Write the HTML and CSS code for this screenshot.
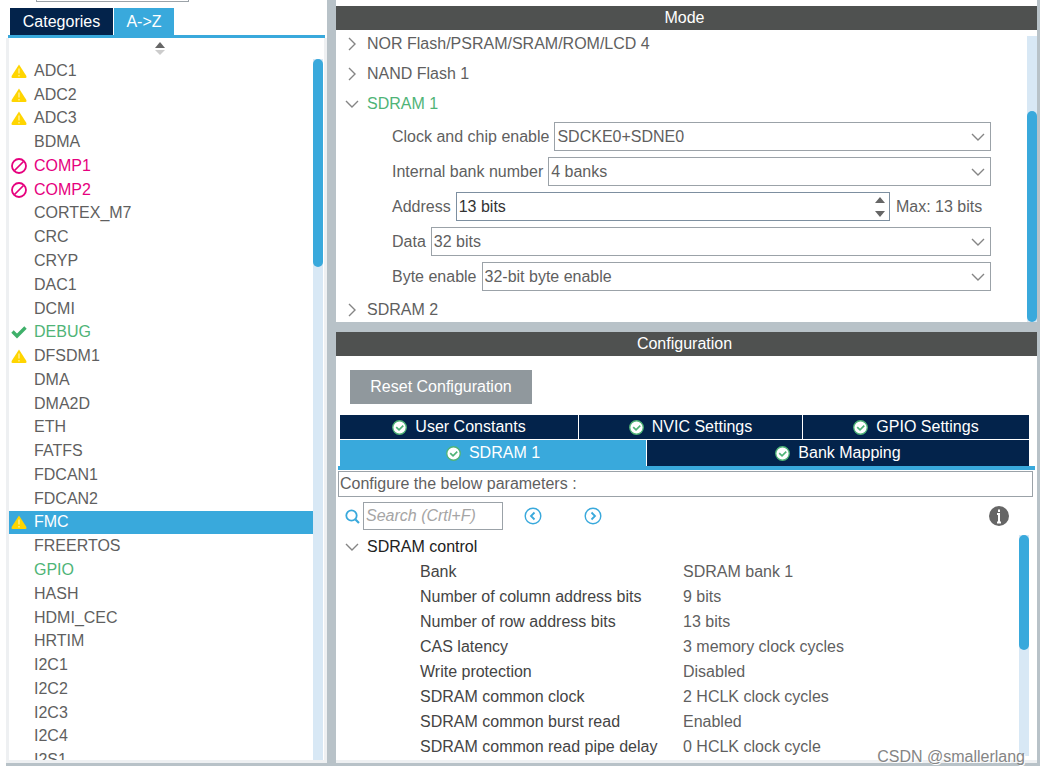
FILE: index.html
```html
<!DOCTYPE html>
<html lang="en">

<head>
  <meta charset="utf-8">
  <title>FMC Mode and Configuration</title>
  <link rel="stylesheet" href="styles.css">
</head>

<body>
  <!-- shared icons -->
  <svg class="sprite" aria-hidden="true">
    <symbol id="warn" viewBox="0 0 16 14">
      <path d="M8 0.5 L15.4 12 Q16 14 14.500 14 H1.500 Q0 14 0.600 12 Z" fill="#ffd500" />
      <path d="M8 4.500 V9.500 M8 11 V12.500" stroke="#fff0a0" stroke-width="1.300" />
    </symbol>
    <symbol id="block" viewBox="0 0 16 16">
      <circle cx="8" cy="8" r="7" fill="none" stroke="currentColor" stroke-width="1.800" />
      <path d="M3.500 12.500 L12.500 3.500" stroke="currentColor" stroke-width="1.700" />
    </symbol>
    <symbol id="check" viewBox="0 0 16 14">
      <path d="M1.500 6.500 L6 11 L14.500 2.500" fill="none" stroke="#3fb06a" stroke-width="3.400" />
    </symbol>
    <symbol id="right" viewBox="0 0 14 14">
      <path d="M4 1 L10 7 L4 13" fill="none" stroke="#858585" stroke-width="1.400" />
    </symbol>
    <symbol id="down" viewBox="0 0 14 14">
      <path d="M1 4 L7 10 L13 4" fill="none" stroke="#858585" stroke-width="1.400" />
    </symbol>
    <symbol id="ok" viewBox="0 0 16 16">
      <circle cx="8" cy="8" r="7.200" fill="#fff" stroke="#4fb477" stroke-width="1.400" />
      <path d="M4.500 7.500 L7.500 10.500 L12 6" fill="none" stroke="#4fb477" stroke-width="1.800" />
    </symbol>
  </svg>

  <main class="app">
    <section class="left">
      <div class="filter"><input type="text" aria-label="Filter"></div>
      <div class="tabs">
        <button type="button">Categories</button>
        <button type="button" class="active">A-&gt;Z</button>
      </div>
      <div class="peripherals">
        <div class="sort">
          <svg width="10" height="14" viewBox="0 0 10 14">
            <path d="M0 6 L5 0 L10 6 Z" fill="#666" />
            <path d="M0 8 L5 13 L10 8 Z" fill="#ccc" />
          </svg>
        </div>
        <div class="listArea">
          <ul class="list">
            <li><svg><use href="#warn" /></svg><a href="#">ADC1</a></li>
            <li><svg><use href="#warn" /></svg><a href="#">ADC2</a></li>
            <li><svg><use href="#warn" /></svg><a href="#">ADC3</a></li>
            <li><a href="#">BDMA</a></li>
            <li class="blocked"><svg><use href="#block" /></svg><a href="#">COMP1</a></li>
            <li class="blocked"><svg><use href="#block" /></svg><a href="#">COMP2</a></li>
            <li><a href="#">CORTEX_M7</a></li>
            <li><a href="#">CRC</a></li>
            <li><a href="#">CRYP</a></li>
            <li><a href="#">DAC1</a></li>
            <li><a href="#">DCMI</a></li>
            <li class="enabled"><svg><use href="#check" /></svg><a href="#">DEBUG</a></li>
            <li><svg><use href="#warn" /></svg><a href="#">DFSDM1</a></li>
            <li><a href="#">DMA</a></li>
            <li><a href="#">DMA2D</a></li>
            <li><a href="#">ETH</a></li>
            <li><a href="#">FATFS</a></li>
            <li><a href="#">FDCAN1</a></li>
            <li><a href="#">FDCAN2</a></li>
            <li class="selected"><svg><use href="#warn" /></svg><a href="#">FMC</a></li>
            <li><a href="#">FREERTOS</a></li>
            <li class="enabled"><a href="#">GPIO</a></li>
            <li><a href="#">HASH</a></li>
            <li><a href="#">HDMI_CEC</a></li>
            <li><a href="#">HRTIM</a></li>
            <li><a href="#">I2C1</a></li>
            <li><a href="#">I2C2</a></li>
            <li><a href="#">I2C3</a></li>
            <li><a href="#">I2C4</a></li>
            <li><a href="#">I2S1</a></li>
          </ul>
          <div class="scroll"><div class="thumb listThumb"></div></div>
        </div>
      </div>
    </section>

    <div class="right">
      <section class="mode">
        <h2>Mode</h2>
        <div class="modeBody">
          <div class="tree">
            <button type="button" class="node"><svg><use href="#right" /></svg>NOR Flash/PSRAM/SRAM/ROM/LCD 4</button>
            <button type="button" class="node"><svg><use href="#right" /></svg>NAND Flash 1</button>
            <button type="button" class="node enabled"><svg><use href="#down" /></svg>SDRAM 1</button>
            <div class="fields">
              <div class="field">
                <label for="clock">Clock and chip enable</label>
                <div class="control">
                  <select id="clock"><option>SDCKE0+SDNE0</option></select>
                  <svg><use href="#down" /></svg>
                </div>
              </div>
              <div class="field">
                <label for="banks">Internal bank number</label>
                <div class="control">
                  <select id="banks"><option>4 banks</option></select>
                  <svg><use href="#down" /></svg>
                </div>
              </div>
              <div class="field">
                <label for="address">Address</label>
                <div class="control spinner">
                  <input type="text" id="address" value="13 bits">
                  <svg viewBox="0 0 12 20">
                    <path d="M1 6 L6 0 L11 6 Z M1 14 L6 20 L11 14 Z" fill="#666" />
                  </svg>
                </div>
                <span class="max">Max: 13 bits</span>
              </div>
              <div class="field">
                <label for="data">Data</label>
                <div class="control">
                  <select id="data"><option>32 bits</option></select>
                  <svg><use href="#down" /></svg>
                </div>
              </div>
              <div class="field">
                <label for="byte">Byte enable</label>
                <div class="control">
                  <select id="byte"><option>32-bit byte enable</option></select>
                  <svg><use href="#down" /></svg>
                </div>
              </div>
            </div>
            <button type="button" class="node"><svg><use href="#right" /></svg>SDRAM 2</button>
          </div>
          <div class="scroll"><div class="thumb modeThumb"></div></div>
        </div>
      </section>

      <section class="config">
        <h2>Configuration</h2>
        <button type="button" class="reset">Reset Configuration</button>
        <div class="configTabs">
          <div class="tabRow three">
            <button type="button"><svg><use href="#ok" /></svg>User Constants</button>
            <button type="button"><svg><use href="#ok" /></svg>NVIC Settings</button>
            <button type="button"><svg><use href="#ok" /></svg>GPIO Settings</button>
          </div>
          <div class="tabRow two">
            <button type="button" class="active"><svg><use href="#ok" /></svg>SDRAM 1</button>
            <button type="button"><svg><use href="#ok" /></svg>Bank Mapping</button>
          </div>
        </div>
        <p class="hint">Configure the below parameters :</p>
        <div class="search">
          <label for="search">
            <svg width="15" height="15" viewBox="0 0 15 15" aria-label="Search">
              <circle cx="6.500" cy="6.500" r="5.200" fill="none" stroke="#39a9dc" stroke-width="1.800" />
              <path d="M10.500 10.500 L14 14" stroke="#39a9dc" stroke-width="2.200" />
            </svg>
          </label>
          <input type="text" id="search" placeholder="Search (Crtl+F)">
          <button type="button" aria-label="Previous">
            <svg width="18" height="18" viewBox="0 0 18 18" fill="none" stroke="#39a9dc" stroke-width="1.400">
              <circle cx="9" cy="9" r="7.800" />
              <path d="M10.500 5.500 L7 9 L10.500 12.500" stroke-width="1.800" />
            </svg>
          </button>
          <button type="button" aria-label="Next">
            <svg width="18" height="18" viewBox="0 0 18 18" fill="none" stroke="#39a9dc" stroke-width="1.400">
              <circle cx="9" cy="9" r="7.800" />
              <path d="M7.500 5.500 L11 9 L7.500 12.500" stroke-width="1.800" />
            </svg>
          </button>
          <button type="button" class="info" aria-label="Information">
            <svg width="20" height="20" viewBox="0 0 20 20">
              <circle cx="10" cy="10" r="10" fill="#666" />
              <path d="M10 3.500 V6 M8 8 H10 V16 M8 16.500 H12" fill="none" stroke="#fff" stroke-width="2" />
            </svg>
          </button>
        </div>
        <div class="params">
          <div class="paramBody">
            <button type="button" class="node group"><svg><use href="#down" /></svg>SDRAM control</button>
            <table>
              <tr><th>Bank</th><td>SDRAM bank 1</td></tr>
              <tr><th>Number of column address bits</th><td>9 bits</td></tr>
              <tr><th>Number of row address bits</th><td>13 bits</td></tr>
              <tr><th>CAS latency</th><td>3 memory clock cycles</td></tr>
              <tr><th>Write protection</th><td>Disabled</td></tr>
              <tr><th>SDRAM common clock</th><td>2 HCLK clock cycles</td></tr>
              <tr><th>SDRAM common burst read</th><td>Enabled</td></tr>
              <tr><th>SDRAM common read pipe delay</th><td>0 HCLK clock cycle</td></tr>
            </table>
          </div>
          <div class="scroll"><div class="thumb paramThumb"></div></div>
        </div>
      </section>
    </div>
  </main>
  <div class="watermark">CSDN @smallerlang</div>
</body>

</html>
```

FILE: styles.css
```css
* {
  box-sizing: border-box;
}

body {
  background-color: white;
  color: #5f5f5f;
  font-family: "Liberation Sans", Arial, sans-serif;
  font-size: 16px;
  height: 100vh;
  margin: 0;
  overflow: hidden;
  padding: 0 0 9px 6px;
  position: relative;
}

button,
input,
select {
  background-color: transparent;
  border: 0;
  border-radius: 0;
  color: inherit;
  font: inherit;
  margin: 0;
  padding: 0;
}

svg {
  display: block;
  flex-shrink: 0;
}

.sprite {
  height: 0;
  position: absolute;
  width: 0;
}

.app {
  border-bottom: 3px solid #b8c2c8;
  display: flex;
  height: 100%;
}

/* peripheral list */
.left {
  display: flex;
  flex: 0 0 321px;
  flex-direction: column;
  min-height: 0;
}

.filter {
  align-items: flex-end;
  display: flex;
  height: 8px;
  overflow: hidden;
  padding: 0 0 6px 30px;
}

.filter input {
  border: 1px solid #9ba2a8;
  flex: none;
  height: 28px;
  width: 153px;
}

.tabs {
  border-bottom: 3px solid #39a9dc;
  display: flex;
  gap: 1px;
  height: 30px;
  margin: 0 2px;
  padding-left: 2px;
}

.tabs button {
  background-color: #03234b;
  color: white;
  flex: 0 0 103px;
}

.tabs .active {
  background-color: #39a9dc;
  flex-basis: 60px;
}

.peripherals {
  border: 3px solid #eef0f2;
  border-top: 0;
  display: flex;
  flex: 1;
  flex-direction: column;
  min-height: 0;
}

.sort {
  display: flex;
  height: 21px;
  justify-content: center;
  margin-right: 14px;
  padding-top: 4px;
}

.listArea {
  display: flex;
  flex: 1;
  min-height: 0;
  overflow: hidden;
  padding-right: 1px;
}

/* last row runs under the bottom edge */
.list {
  display: grid;
  flex: 1;
  grid-auto-rows: minmax(0, 1fr);
  list-style: none;
  margin: 0 0 -12px;
  padding: 0;
}

.list li {
  align-items: center;
  display: grid;
  grid-template-columns: 25px 1fr;
}

.list svg {
  height: 14px;
  margin-left: 2px;
  width: 16px;
}

.list .blocked svg {
  height: 16px;
}

.list a {
  color: inherit;
  grid-column: 2;
  text-decoration: none;
}

.list .blocked {
  color: #e6007e;
}

.enabled {
  color: #4fb477;
}

.list .selected {
  background-color: #39a9dc;
  color: white;
}

/* scroll bars */
.scroll {
  background-color: #d8e8f5;
  flex: 0 0 10px;
}

.thumb {
  background-color: #39a9dc;
  border-radius: 5px;
}

.listThumb {
  height: 208px;
}

/* right column */
.right {
  border: solid #b8c2c8;
  border-width: 0 3px 0 9px;
  display: flex;
  flex: 1;
  flex-direction: column;
  min-width: 0;
}

h2 {
  background-color: #4f5150;
  color: white;
  font-size: 16px;
  font-weight: normal;
  line-height: 24px;
  margin: 0;
  padding-right: 4px;
  text-align: center;
}

.mode {
  border-bottom: 10px solid #b8c2c8;
  padding-top: 6px;
}

.modeBody {
  display: flex;
  height: 292px;
  overflow: hidden;
}

.modeBody .scroll {
  margin-top: 6px;
}

.tree {
  flex: 1;
  margin-top: -1px;
  padding-right: 36px;
}

.node {
  align-items: center;
  display: flex;
  gap: 8px;
  height: 30px;
  padding-left: 9px;
}

.node svg {
  height: 14px;
  width: 14px;
}

.fields {
  display: grid;
  gap: 6px;
  padding: 3px 0 4px 56px;
}

.field {
  align-items: center;
  display: flex;
  gap: 5px;
}

.control {
  flex: 1;
  position: relative;
}

.control select,
.control input {
  appearance: none;
  border: 1px solid #9ba2a8;
  display: block;
  height: 29px;
  padding: 0 2px;
  width: 100%;
}

.control svg {
  height: 14px;
  pointer-events: none;
  position: absolute;
  right: 6px;
  top: 8px;
  width: 14px;
}

.control.spinner input {
  border-color: #7d8fa0;
  color: #333;
}

.control.spinner svg {
  height: 20px;
  right: 4px;
  top: 5px;
  width: 12px;
}

.max {
  flex: 0 0 96px;
  padding-left: 1px;
}

.modeThumb {
  height: 211px;
  margin-top: 75px;
}

/* configuration */
.config {
  border-bottom: 3px solid #eef0f2;
  display: flex;
  flex: 1;
  flex-direction: column;
  min-height: 0;
}

.reset {
  align-self: flex-start;
  background-color: #90989d;
  color: white;
  height: 34px;
  margin: 14px 0 11px 14px;
  width: 182px;
}

.configTabs {
  border-bottom: 4px solid #39a9dc;
  display: grid;
  gap: 1px;
  margin: 0 2px;
  padding: 0 6px 0 2px;
}

.tabRow {
  display: grid;
  gap: 1px;
}

.three {
  grid-template-columns: 238fr 223fr 226fr;
}

.two {
  grid-template-columns: 306fr 382fr;
}

.tabRow button {
  align-items: center;
  background-color: #03234b;
  color: white;
  display: flex;
  gap: 8px;
  height: 24px;
  justify-content: center;
}

.two button {
  height: 26px;
}

.tabRow .active {
  background-color: #39a9dc;
}

.tabRow svg {
  height: 15px;
  width: 15px;
}

.hint {
  border: 1px solid #9ba2a8;
  line-height: 24px;
  margin: 1px 4px 5px 2px;
  padding-left: 1px;
}

.search {
  align-items: center;
  display: flex;
  padding: 0 28px 0 9px;
}

.search input {
  border: 1px solid #9ba2a8;
  height: 28px;
  margin: 0 21px 0 3px;
  padding: 0 2px;
  width: 140px;
}

.search input::placeholder {
  color: #a5a5a5;
  font-style: italic;
  opacity: 1;
}

.search button {
  margin-right: 42px;
}

.search .info {
  margin: 0 0 0 auto;
}

.params {
  display: flex;
  flex: 1;
  margin: 5px 8px 4px 0;
  min-height: 0;
}

.paramBody {
  flex: 1;
}

.group {
  color: #222;
  height: 24px;
}

table {
  border-collapse: collapse;
  margin-left: 84px;
}

th,
td {
  font-weight: normal;
  height: 25px;
  padding: 0;
  text-align: left;
}

th {
  color: #444;
  width: 263px;
}

.paramThumb {
  height: 115px;
}

.watermark {
  bottom: 9px;
  color: #858585;
  position: absolute;
  right: 15px;
  text-shadow: 1px 1px 0 white;
}
```
